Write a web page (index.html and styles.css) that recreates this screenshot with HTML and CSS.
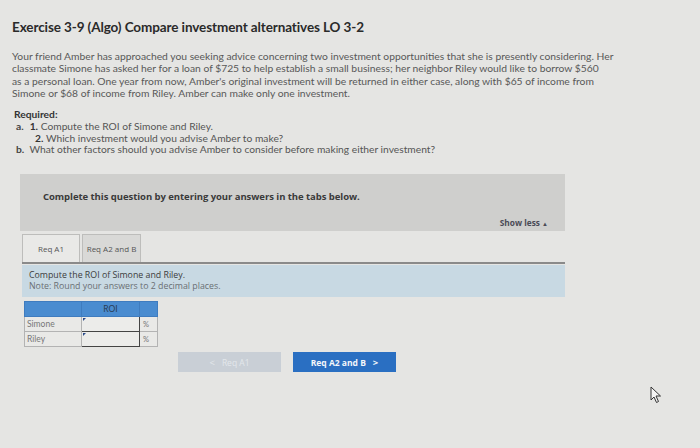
FILE: index.html
```html
<!DOCTYPE html>
<html>
<head>
<meta charset="utf-8">
<link rel="stylesheet" href="styles.css">
</head>
<body>
<div class="page">
  <h1 class="title">Exercise 3-9 (Algo) Compare investment alternatives LO 3-2</h1>
  <p class="intro">Your friend Amber has approached you seeking advice concerning two investment opportunities that she is presently considering. Her<br>classmate Simone has asked her for a loan of $725 to help establish a small business; her neighbor Riley would like to borrow $560<br>as a personal loan. One year from now, Amber's original investment will be returned in either case, along with $65 of income from<br>Simone or $68 of income from Riley. Amber can make only one investment.</p>
  <div class="required">
    <div class="req-title">Required:</div>
    <div class="req-line"><b class="lbl">a.</b> <b>1.</b> Compute the ROI of Simone and Riley.</div>
    <div class="req-line sub"><b>2.</b> Which investment would you advise Amber to make?</div>
    <div class="req-line"><b class="lbl">b.</b> What other factors should you advise Amber to consider before making either investment?</div>
  </div>

  <div class="panel">
    <div class="panel-text">Complete this question by entering your answers in the tabs below.</div>
    <div class="show-less">Show less <span class="tri">&#9650;</span></div>
  </div>

  <div class="tabs">
    <div class="tab active">Req A1</div>
    <div class="tab">Req A2 and B</div>
  </div>

  <div class="instr">
    <div>Compute the ROI of Simone and Riley.</div>
    <div class="note">Note: Round your answers to 2 decimal places.</div>
  </div>

  <table class="roi">
    <tr class="head"><th class="c1"></th><th class="c2">ROI</th><th class="c3"></th></tr>
    <tr><td class="c1">Simone</td><td class="c2 inp"><span class="flag"></span></td><td class="c3">%</td></tr>
    <tr><td class="c1">Riley</td><td class="c2 inp"><span class="flag"></span></td><td class="c3">%</td></tr>
  </table>

  <div class="nav">
    <div class="btn prev"><span class="chev">&lt;</span> Req A1</div>
    <div class="btn next">Req A2 and B <span class="chev">&gt;</span></div>
  </div>
</div>
<svg class="cursor" width="12" height="18" viewBox="0 0 12 18"><path d="M1 1 L1 14 L4 11 L6.5 16.5 L8.5 15.5 L6 10 L10.5 10 Z" fill="#f4f4f4" stroke="#333" stroke-width="1"/></svg>
</body>
</html>
```
FILE: styles.css
```css
html, body {
  margin: 0;
  padding: 0;
  background: #e5e5e3;
}
body {
  font-family: Lato, "Liberation Sans", sans-serif;
  color: #444;
  width: 700px;
  height: 448px;
  overflow: hidden;
  position: relative;
}
.page {
  padding: 19px 0 0 12px;
}
.title {
  margin: 0;
  font-size: 13.5px;
  font-weight: 700;
  color: #2a2a2a;
  line-height: 16px;
  letter-spacing: -0.1px;
}
.intro {
  margin: 15px 0 0 0;
  width: 660px;
  white-space: nowrap;
  font-size: 10.3px;
  line-height: 12.3px;
  color: #585858;
}
.required {
  margin-top: 10px;
  font-size: 10.25px;
  line-height: 11.7px;
  color: #555;
  padding-left: 2px;
}
.req-title {
  font-weight: 700;
  color: #333;
}
.req-line .lbl {
  display: inline-block;
  width: 11px;
  font-weight: 700;
  color: #444;
}
.req-line b { color: #333; }
.req-line {
  padding-left: 2px;
}
.req-line.sub {
  padding-left: 21px;
}
.panel {
  margin: 18px 0 0 8px;
  width: 545px;
  height: 57px;
  background: #cfcfcd;
  display: flex;
  flex-direction: column;
  box-sizing: border-box;
  padding: 16px 0 0 23px;
}
.panel-text {
  font-family: "Open Sans", "DejaVu Sans", sans-serif;
  font-size: 9.5px;
  font-weight: 700;
  color: #3a3a3a;
  letter-spacing: -0.05px;
}
.show-less {
  align-self: flex-end;
  margin: 14px 17px 0 0;
  font-family: "Open Sans", sans-serif;
  font-size: 8.3px;
  font-weight: 700;
  color: #4a4a55;
}
.show-less .tri { font-size: 6px; }
.tabs {
  margin: 3px 0 0 10px;
  width: 543px;
  display: flex;
  gap: 2px;
  border-bottom: 2px solid #8a8a8a;
  height: 28px;
  align-items: stretch;
}
.tab {
  font-family: "Open Sans", sans-serif;
  font-size: 8px;
  color: #555;
  border: 1px solid #bdbdbb;
  border-bottom: none;
  display: flex;
  align-items: center;
  justify-content: center;
  background: #d9d9d7;
  width: 59px;
  box-sizing: border-box;
}
.tab.active {
  background: #e9e9e7;
  width: 58px;
}
.instr {
  margin: 1px 0 0 10px;
  width: 543px;
  height: 32px;
  box-sizing: border-box;
  background: #c8d9e3;
  padding: 5px 0 0 7px;
  font-family: "Open Sans", sans-serif;
  font-size: 8.8px;
  line-height: 10.5px;
  color: #3c3c3c;
}
.instr .note { color: #6a6f73; }
.roi {
  margin: 4px 0 0 12px;
  border-collapse: collapse;
  font-family: Lato, sans-serif;
  font-size: 8.5px;
}
.roi td, .roi th {
  height: 15px;
  padding: 0;
  box-sizing: border-box;
}
.roi .head th {
  background: #4a8cd0;
  color: #2a3d55;
  font-weight: 400;
  font-size: 8.5px;
  border: 1px solid #3f7cbf;
}
.roi .c1 { width: 57px; }
.roi .c2 { width: 58px; }
.roi .c3 { width: 18px; }
.roi td {
  border: 1px solid #b3b3b3;
  background: #e9e9e7;
  color: #777;
}
.roi td.c1 { padding-left: 2px; }
.roi td.c3 { padding-left: 3px; font-size: 7.5px; }
.roi td.inp {
  border: 1px solid #444;
  background: #ececea;
  position: relative;
}
.flag {
  position: absolute;
  left: 1px;
  top: 1px;
  width: 0;
  height: 0;
  border-top: 3px solid #2a4a8a;
  border-right: 3px solid transparent;
}
.nav {
  margin: 5px 0 0 166px;
  display: flex;
  gap: 12px;
}
.btn {
  width: 103px;
  height: 20px;
  display: flex;
  align-items: center;
  justify-content: center;
  gap: 7px;
  font-family: "Open Sans", sans-serif;
  font-size: 8.5px;
  font-weight: 700;
}
.btn .chev { font-size: 9.5px; }
.btn.prev {
  background: #c9cfd6;
  color: #e3e7eb;
  font-weight: 400;
}
.btn.next {
  background: #2a6fc2;
  color: #f3f6fa;
}
.cursor {
  position: absolute;
  left: 650px;
  top: 386px;
}
```
